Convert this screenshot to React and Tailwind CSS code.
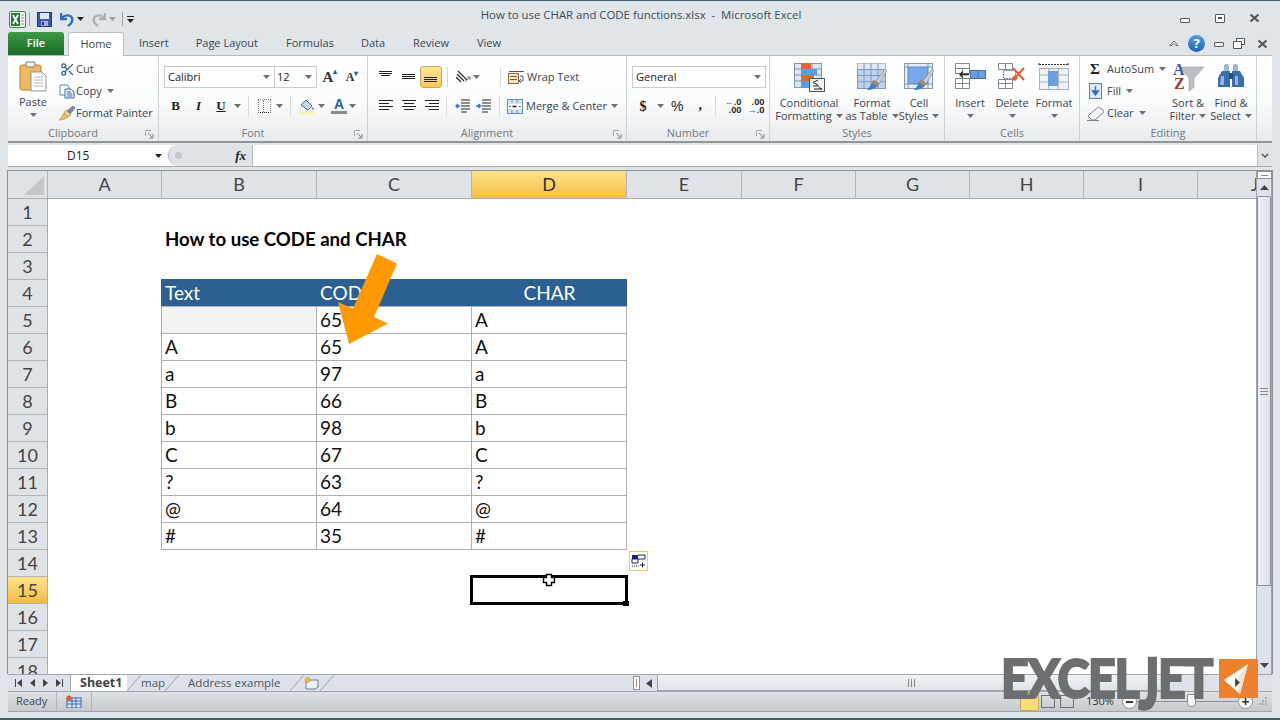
import React from 'react';
import { Scissors } from 'lucide-react';

const Caret = ({ className = '' }) => (
  <svg width="7" height="4" viewBox="0 0 7 4" className={`shrink-0 ${className}`}>
    <path d="M0 0h7L3.5 4z" fill="#6b6f75" />
  </svg>
);

// horizontal text lines, for the alignment buttons
const Lines = ({ rows, y0 = 0, gap = 3, width = 16, height = 12, color = '#222' }) => (
  <svg width={width} height={height} viewBox={`0 0 ${width} ${height}`}>
    {rows.map(([a, b], i) => (
      <rect key={i} x={a} y={y0 + i * gap} width={b - a} height="1" fill={color} />
    ))}
  </svg>
);

const Launcher = () => (
  <svg width="9" height="9" viewBox="0 0 9 9" className="absolute right-[4px] top-[3px]">
    <path d="M0.5 6V0.5H6" fill="none" stroke="#a5aab0" />
    <path d="M3 3l4 4M8 4v4H4" fill="none" stroke="#7d8288" />
  </svg>
);

const ExcelIcon = () => (
  <svg width="17" height="17" viewBox="0 0 17 17">
    <rect x="0.5" y="0.5" width="16" height="16" rx="1.5" fill="#f2f8ee" stroke="#3c8b3c" />
    <rect x="2" y="2" width="9" height="13" fill="#1f7a36" />
    <path d="M4 4l5 9M9 4l-5 9" stroke="#fff" strokeWidth="1.8" />
    <path d="M12 4h3M12 7h3M12 10h3M12 13h3" stroke="#6aa56a" />
  </svg>
);

const SaveIcon = () => (
  <svg width="15" height="15" viewBox="0 0 15 15">
    <rect x="0.5" y="0.5" width="14" height="14" fill="#3a55b8" stroke="#27357f" />
    <rect x="3" y="1" width="9" height="6" fill="#dfe7f5" />
    <rect x="4" y="9" width="7" height="5" fill="#a9b0c8" />
    <rect x="5" y="10" width="2" height="3" fill="#27357f" />
  </svg>
);

const UndoIcon = ({ color, flip }) => (
  <svg width="14" height="15" viewBox="0 0 14 15" className={flip ? '-scale-x-100' : ''}>
    <path d="M1 1v6h6M2 6c2-3 8-4 10 0 1 3-1 6-4 8" fill="none" stroke={color} strokeWidth="2.4" />
  </svg>
);

const PasteIcon = () => (
  <svg width="28" height="32" viewBox="0 0 28 32">
    <rect x="1" y="4" width="21" height="25" rx="2" fill="#f2b85f" stroke="#b5832f" />
    <rect x="7" y="1" width="9" height="5" rx="1" fill="#f4f4f4" stroke="#777" />
    <path d="M12 11h11l4 4v15H12z" fill="#fff" stroke="#8a94a3" />
    <path d="M15 16h9M15 19h9M15 22h9M15 25h9" stroke="#aeb6c2" />
  </svg>
);

const CopyIcon = () => (
  <svg width="16" height="15" viewBox="0 0 16 15">
    <path d="M1 1h7l2 2v8H1z" fill="#fff" stroke="#5a7db0" />
    <path d="M6 5h6l3 3v6H6z" fill="#e8f0fb" stroke="#3b68a8" />
    <path d="M8 8h4M8 10h5M8 12h5" stroke="#3b68a8" />
  </svg>
);

const PainterIcon = () => (
  <svg width="18" height="16" viewBox="0 0 18 16">
    <path d="M9 6l6-5 2 2-5 6z" fill="#7a8aa0" stroke="#4d5a6b" strokeWidth="0.6" />
    <path d="M8 5l5 5-3 2-4-4z" fill="#e5cf8e" stroke="#a08a40" strokeWidth="0.6" />
    <path d="M6 8l4 4c-2 2-6 3-9 3 2-1 3-4 5-7z" fill="#e8bf58" stroke="#a08a40" strokeWidth="0.6" />
  </svg>
);

const Grid = ({ x = 0, y = 0, w, h, cols, rows, fill = '#dce7f5', stroke = '#7f93ad' }) => {
  const cw = w / cols;
  const rh = h / rows;
  const parts = [];
  for (let i = 1; i < cols; i++) parts.push(`M${x + i * cw} ${y}v${h}`);
  for (let i = 1; i < rows; i++) parts.push(`M${x} ${y + i * rh}h${w}`);
  return (
    <g>
      <rect x={x + 0.5} y={y + 0.5} width={w} height={h} fill={fill} stroke={stroke} />
      <path d={parts.join('')} stroke={stroke} fill="none" />
    </g>
  );
};

const Brush = () => (
  <g>
    <path d="M20 19L29 7l2 2-8 13z" fill="#c9ccd1" stroke="#7d8288" strokeWidth="0.6" />
    <path d="M18 18l5 4c-2 4-7 6-12 6 3-2 4-7 7-10z" fill="#3b7fd1" />
    <path d="M18 18l5 4-2 2-5-3z" fill="#b28a4a" />
  </g>
);

const CondIcon = () => (
  <svg width="32" height="30" viewBox="0 0 32 30">
    <Grid x={1} y={1} w={27} h={24} cols={3} rows={4} fill="#dce6f3" />
    <rect x="8" y="1" width="10" height="6" fill="#ef5f35" />
    <rect x="8" y="7" width="16" height="6" fill="#5f9be0" />
    <rect x="8" y="13" width="13" height="6" fill="#ef5f35" />
    <rect x="8" y="19" width="10" height="6" fill="#5f9be0" />
    <rect x="16.5" y="16.5" width="15" height="13" fill="#f5f6f8" stroke="#555" />
    <path d="M25 18l-5 2.5 5 2.5M20 24h6M21 27h8l-3-1.5" fill="none" stroke="#222" />
  </svg>
);

const TableIcon = () => (
  <svg width="32" height="30" viewBox="0 0 32 30">
    <Grid x={1} y={1} w={28} h={25} cols={4} rows={4} fill="#bcd4f2" stroke="#8098b8" />
    <rect x="1.5" y="1.5" width="28" height="6" fill="#dfe8f4" />
    <path d="M1 7.5h28M8 1v6M15 1v6M22 1v6" stroke="#8098b8" />
    <Brush />
  </svg>
);

const StylesIcon = () => (
  <svg width="32" height="30" viewBox="0 0 32 30">
    <Grid x={1} y={1} w={28} h={25} cols={1} rows={1} fill="#e8eef6" stroke="#8098b8" />
    <rect x="5" y="5" width="20" height="17" fill="#7aa8ea" stroke="#5a86c8" />
    <path d="M5 1v4M25 1v4M1 5h4M25 5h4M1 22h4M25 22h4M5 22v4M25 22v4" stroke="#8098b8" />
    <Brush />
  </svg>
);

const InsertIcon = () => (
  <svg width="32" height="28" viewBox="0 0 32 28">
    <path d="M1.5 1.5h14v10h-14zM1.5 6.5h14M8.5 6.5v5M1.5 16.5h14v10h-14zM1.5 21.5h14M8.5 16.5v10" fill="#fff" stroke="#7f8793" />
    <rect x="16.5" y="8.5" width="15" height="8" fill="#6a9fe0" stroke="#3d72b8" />
    <path d="M24 8.5v8" stroke="#3d72b8" />
    <path d="M15 12.5H6M9 9.5l-3 3 3 3" fill="none" stroke="#222" strokeWidth="1.3" />
  </svg>
);

const DeleteIcon = () => (
  <svg width="30" height="28" viewBox="0 0 30 28">
    <path d="M1.5 1.5h14v6h-14zM8.5 1.5v6M1.5 17.5h14v9h-14zM1.5 21.5h14M8.5 17.5v9" fill="#fff" stroke="#7f8793" />
    <rect x="6.5" y="8.5" width="12" height="8" fill="#fff" stroke="#4a6fb0" strokeDasharray="1.5 1" />
    <path d="M16 6l11 12M27 6L16 18" stroke="#f0562a" strokeWidth="2" />
    <path d="M18 13l3 3-3 3-3-3z" fill="#f0562a" />
  </svg>
);

const FormatIcon = () => (
  <svg width="32" height="30" viewBox="0 0 32 30">
    <path d="M1 1v3M30 1v3M1 2.500h29" stroke="#333" strokeDasharray="2 1" />
    <Grid x={1} y={6} w={29} h={21} cols={3} rows={3} fill="#eef2f7" stroke="#a7afba" />
    <rect x="10" y="9" width="10" height="15" fill="#6a9fe0" />
  </svg>
);

const SortIcon = () => (
  <svg width="32" height="30" viewBox="0 0 32 30">
    <path d="M8 5h24L22 16v9l-5 4V16z" fill="#bdbfc2" stroke="#8a8d91" strokeWidth="0.5" />
    <text x="1" y="13" fontSize="16" fontWeight="700" fontFamily="Liberation Serif" fill="#2a5fb5">A</text>
    <text x="2" y="27" fontSize="16" fontWeight="700" fontFamily="Liberation Serif" fill="#a8392f">Z</text>
  </svg>
);

const FindIcon = () => (
  <svg width="28" height="28" viewBox="0 0 28 28">
    <rect x="7" y="2" width="5" height="8" rx="2" fill="#9db3d0" />
    <rect x="16" y="2" width="5" height="8" rx="2" fill="#9db3d0" />
    <path d="M5 9h8v16H1V16z" fill="#3a6ea8" />
    <path d="M15 9h8l4 7v9H15z" fill="#3a6ea8" />
    <path d="M4 14h3v9H3zM18 14h3v9h-3z" fill="#8fb5e0" />
    <rect x="12" y="11" width="4" height="6" fill="#26507f" />
  </svg>
);

const FillIcon = () => (
  <svg width="13" height="16" viewBox="0 0 13 16">
    <rect x="0.500" y="0.500" width="12" height="15" fill="#dbe7f7" stroke="#5a82b8" />
    <path d="M6.500 3v6M3.500 8l3 4 3-4z" fill="#2c6fc4" stroke="#2c6fc4" strokeWidth="1.3" />
  </svg>
);

const EraserIcon = () => (
  <svg width="17" height="15" viewBox="0 0 17 15">
    <path d="M1 10l9-8c1-1 2-1 3 0l3 2c1 1 1 2 0 3l-8 7H5z" fill="#f2f4f7" stroke="#7d8288" />
    <path d="M0 14.500h12" stroke="#7d8288" />
  </svg>
);

const WrapIcon = () => (
  <svg width="17" height="15" viewBox="0 0 17 15">
    <path d="M1 1.500h15" stroke="#555" />
    <rect x="0.500" y="3.500" width="10" height="10" fill="#f8e6d0" stroke="#8c6a3a" />
    <path d="M2 6.500h7M2 9.500h7" stroke="#8c5a1a" />
    <path d="M12 6h3v5h-3M13 9l-2 2 2 2" fill="none" stroke="#3b68a8" />
  </svg>
);

const MergeIcon = () => (
  <svg width="16" height="15" viewBox="0 0 16 15">
    <rect x="0.500" y="0.500" width="15" height="14" fill="#d7e4f5" stroke="#6a8bb8" />
    <rect x="1" y="5" width="14" height="5" fill="#fff" />
    <path d="M5 1v3M10 1v3M5 11v3M10 11v3" stroke="#6a8bb8" />
    <path d="M5.500 7.500h4" stroke="#222" strokeWidth="1.6" />
    <path d="M2 7.500h2M12 7.500h2" stroke="#2c6fc4" />
  </svg>
);

const Orient = () => (
  <svg width="16" height="14" viewBox="0 0 16 14">
    <path d="M2 1l9 9M1 4l7 7M0 7l5 5" stroke="#333" strokeWidth="1.3" />
    <path d="M9 12l5-5M11 7h3v3" fill="none" stroke="#777" />
  </svg>
);

const Indent = ({ flip }) => (
  <svg width="16" height="14" viewBox="0 0 16 14">
    <path d="M6 1h9M6 4h9M6 7h9M6 10h9M6 13h6" stroke="#222" />
    {flip ? (
      <path d="M0 7h4M2.500 5l2 2-2 2" fill="none" stroke="#2c6fc4" strokeWidth="1.3" />
    ) : (
      <path d="M5 7H1M3 5L1 7l2 2" fill="none" stroke="#2c6fc4" strokeWidth="1.3" />
    )}
  </svg>
);

const Sep = ({ className = '' }) => <div className={`w-px h-[20px] bg-[#d5d9de] shrink-0 ${className}`} />;

const SmallRow = ({ icon, label, caret, labelClass = '' }) => (
  <div className="h-[22px] flex items-center">
    <div className="w-[18px] flex justify-center">{icon}</div>
    <span className={labelClass}>{label}</span>
    {caret && <Caret className="ml-[5px]" />}
  </div>
);

const BigButton = ({ icon, lines, className = '' }) => (
  <div className={`flex flex-col items-center shrink-0 ${className}`}>
    <div className="h-[36px] pt-[6px] flex items-start justify-center">{icon}</div>
    <div className="leading-[13px] mt-[4px] whitespace-nowrap">{lines[0]}</div>
    <div className="leading-[13px] whitespace-nowrap flex items-center gap-[4px]">
      {lines[1]}
      {lines[1] && <Caret />}
    </div>
    {!lines[1] && <Caret className="mt-[5px]" />}
  </div>
);

const Group = ({ width, label, launcher, children }) => (
  <div className={`${width} shrink-0 flex flex-col border-r border-[#ccd1d6]`}>
    <div className="h-[71px] shrink-0">{children}</div>
    <div className={`relative h-[14px] shrink-0 leading-[12px] text-center text-[#6f7780] ${launcher ? 'pr-[20px]' : ''}`}>
      {label}
      {launcher && <Launcher />}
    </div>
  </div>
);

const cols = [
  ['A', 'w-[114px]'],
  ['B', 'w-[155px]'],
  ['C', 'w-[155px]'],
  ['D', 'w-[155px]'],
  ['E', 'w-[115px]'],
  ['F', 'w-[114px]'],
  ['G', 'w-[114px]'],
  ['H', 'w-[114px]'],
  ['I', 'w-[114px]'],
  ['J', 'w-[114px]'],
];

const tableRows = [
  ['', '65', 'A'],
  ['A', '65', 'A'],
  ['a', '97', 'a'],
  ['B', '66', 'B'],
  ['b', '98', 'b'],
  ['C', '67', 'C'],
  ['?', '63', '?'],
  ['@', '64', '@'],
  ['#', '35', '#'],
];

const rowNums = Array.from({ length: 18 }, (_, i) => i + 1);

const Slant = () => (
  <svg width="14" height="17" viewBox="0 0 14 17" className="shrink-0">
    <path d="M0 16L13 1h1" fill="none" stroke="#9aa1ab" />
  </svg>
);

export default function App() {
  return (
    <div className="relative w-[1280px] h-[720px] overflow-hidden bg-[#dfe5e8] font-['Open_Sans',sans-serif] text-[11px] text-[#3b4552] flex flex-col border-t border-[#3f5d6b]">
      {/* Title bar */}
      <div className="h-[30px] shrink-0 flex items-center pl-[9px] pr-[9px] pt-[6px]">
        <ExcelIcon />
        <div className="w-px h-[14px] bg-[#9aa3ab] ml-[3px]" />
        <div className="ml-[7px]"><SaveIcon /></div>
        <div className="ml-[8px]"><UndoIcon color="#2f6fb8" /></div>
        <Caret className="ml-[3px] [&_path]:fill-[#222]" />
        <div className="ml-[8px]"><UndoIcon color="#aab1b8" flip /></div>
        <Caret className="ml-[3px] opacity-60" />
        <div className="w-px h-[14px] bg-[#9aa3ab] ml-[6px]" />
        <div className="ml-[4px] flex flex-col items-center gap-[2px]">
          <div className="w-[7px] h-px bg-[#222]" />
          <Caret className="[&_path]:fill-[#222]" />
        </div>
        <div className="flex-1 text-center text-[11.400px] text-[#3d4a58] -ml-[19px] -mt-[8px] whitespace-pre">How to use CHAR and CODE functions.xlsx  -  Microsoft Excel</div>
        <div className="flex items-center text-[#444] -mt-[2px]">
          <div className="w-[35px] flex justify-center"><div className="w-[10px] h-[5px] border border-[#555] rounded-[1px] bg-white mt-[5px]" /></div>
          <div className="w-[35px] flex justify-center"><div className="w-[10px] h-[9px] border border-[#555] rounded-[1px] bg-white flex items-center justify-center"><div className="w-[4px] h-[2px] bg-[#555]" /></div></div>
          <div className="w-[35px] flex justify-center -mr-[1px]">
            <svg width="11" height="10" viewBox="0 0 11 10"><path d="M1.500 1.500l8 7M9.500 1.500l-8 7" stroke="#555" strokeWidth="2.200" /></svg>
          </div>
        </div>
      </div>

      {/* Tabs */}
      <div className="h-[24px] shrink-0 flex items-end pl-[8px] pr-[12px] relative z-10">
        <div className="w-[56px] h-[23px] rounded-t-[3px] bg-gradient-to-b from-[#3e9a45] to-[#1d6b2a] text-white font-semibold flex items-center justify-center">File</div>
        <div className="w-[56px] h-[24px] ml-[4px] -mb-px bg-white border border-b-0 border-[#b8bec4] rounded-t-[3px] flex items-center justify-center">Home</div>
        <div className="ml-[15px] h-[23px] flex items-center">Insert</div>
        <div className="ml-[27px] h-[23px] flex items-center">Page Layout</div>
        <div className="ml-[28px] h-[23px] flex items-center">Formulas</div>
        <div className="ml-[27px] h-[23px] flex items-center">Data</div>
        <div className="ml-[28px] h-[23px] flex items-center">Review</div>
        <div className="ml-[28px] h-[23px] flex items-center">View</div>
        <div className="ml-auto h-[23px] flex items-center">
          <svg width="10" height="7" viewBox="0 0 10 7" className="mr-[9px]">
            <path d="M5 1L9 5.500H7L5 3.500 3 5.500H1z" fill="#fff" stroke="#555" strokeWidth="0.9" />
          </svg>
          <div className="w-[17px] h-[17px] rounded-full bg-gradient-to-b from-[#5a9be0] to-[#1e62b8] text-white text-[13px] font-bold flex items-center justify-center">?</div>
          <div className="w-[10px] h-[5px] border border-[#555] rounded-[1px] bg-white ml-[9px] mt-[2px]" />
          <svg width="12" height="11" viewBox="0 0 12 11" className="ml-[9px]"><path d="M3.500 3V.5h8v6H9M.5 3.500h8v7h-8z" fill="#fff" stroke="#555" /></svg>
          <svg width="11" height="10" viewBox="0 0 11 10" className="ml-[12px]"><path d="M1.500 1.500l8 7M9.500 1.500l-8 7" stroke="#555" strokeWidth="2.200" /></svg>
        </div>
      </div>

      {/* Ribbon */}
      <div className="h-[88px] shrink-0 mx-[8px] flex border-t border-x-0 border-b-2 border-[#b3b9bf] border-b-[#8f959b] bg-gradient-to-b from-white via-[#fbfcfc] to-[#e8ebee] relative">
        <Group width="w-[151px]" label="Clipboard" launcher>
          <div className="flex">
            <div className="w-[50px] flex flex-col items-center pt-[5px]">
              <PasteIcon />
              <div className="mt-[2px] leading-[14px]">Paste</div>
              <Caret className="mt-[4px]" />
            </div>
            <div className="pt-[2px]">
              <SmallRow icon={<Scissors size={15} className="text-[#2c5f9e]" />} label="Cut" />
              <SmallRow icon={<CopyIcon />} label="Copy" caret />
              <SmallRow icon={<PainterIcon />} label="Format Painter" />
            </div>
          </div>
        </Group>

        <Group width="w-[209px]" label="Font" launcher>
          <div className="pt-[10px] pl-[5px]">
            <div className="flex items-center h-[22px]">
              <div className="w-[111px] h-[22px] border border-[#c5cad0] bg-white flex items-center pl-[3px] pr-[4px] justify-between text-[#222]">Calibri<Caret /></div>
              <div className="w-[42px] h-[22px] border border-l-0 border-[#c5cad0] bg-white flex items-center pl-[2px] pr-[4px] justify-between text-[#222]">12<Caret /></div>
              <div className="w-[24px] ml-[1px] flex justify-center text-[15px] font-bold font-['Liberation_Serif',serif] text-[#333]">A<span className="text-[8px] text-[#2c5f9e]">▴</span></div>
              <div className="w-[20px] flex justify-center text-[12px] font-bold font-['Liberation_Serif',serif] text-[#333]">A<span className="text-[8px] text-[#2c5f9e]">▾</span></div>
            </div>
            <div className="flex items-center h-[22px] mt-[7px] text-[#222]">
              <div className="w-[23px] text-center text-[13px] font-bold font-['Liberation_Serif',serif]">B</div>
              <div className="w-[23px] text-center text-[13px] italic font-bold font-['Liberation_Serif',serif]">I</div>
              <div className="w-[22px] text-center text-[13px] font-bold underline font-['Liberation_Serif',serif]">U</div>
              <Caret className="ml-[2px]" />
              <Sep className="ml-[7px]" />
              <div className="w-[20px] ml-[5px] h-[14px] flex justify-center">
                <div className="w-[13px] h-[14px] border-b border-b-[#222] border-t border-x border-dotted border-[#777] grid grid-cols-2"><div className="border-r border-dotted border-[#777]" /></div>
              </div>
              <Caret className="ml-[2px]" />
              <Sep className="ml-[7px]" />
              <div className="ml-[8px] flex flex-col items-center">
                <svg width="15" height="12" viewBox="0 0 15 12"><path d="M1 6l5-5 6 6-4 4z" fill="#c8d8ee" stroke="#3b68a8" /><path d="M13 8c1 1 1 3 0 3s-1-2 0-3z" fill="#2c6fc4" /></svg>
                <div className="w-[16px] h-[3px] bg-[#fdf3a8]" />
              </div>
              <Caret className="ml-[3px]" />
              <div className="ml-[6px] flex flex-col items-center w-[16px]">
                <span className="text-[14px] leading-[13px] font-bold text-[#2c5f9e] font-['Liberation_Sans',sans-serif]">A</span>
                <div className="w-[16px] h-[3px] bg-[#8a8a8a]" />
              </div>
              <Caret className="ml-[2px]" />
            </div>
          </div>
        </Group>

        <Group width="w-[259px]" label="Alignment" launcher>
          <div className="pt-[10px]">
            <div className="flex items-center h-[22px]">
              <div className="w-[29px] ml-[3px] flex justify-center"><Lines rows={[[1, 14], [1, 14], [3, 12]]} gap={2} /></div>
              <div className="w-[17px] flex justify-center"><Lines rows={[[1, 14], [1, 14], [1, 14]]} y0={3} gap={2} /></div>
              <div className="w-[22px] h-[22px] ml-[3px] rounded-[3px] border border-[#c9a85a] bg-gradient-to-b from-[#fde59a] to-[#fcc94f] flex items-center justify-center"><Lines rows={[[1, 14], [1, 14], [1, 14]]} y0={6} gap={2} /></div>
              <Sep className="ml-[5px]" />
              <div className="ml-[8px]"><Orient /></div>
              <Caret className="ml-[1px]" />
              <Sep className="ml-[20px]" />
              <div className="ml-[7px]"><WrapIcon /></div>
              <span className="ml-[2px]">Wrap Text</span>
            </div>
            <div className="flex items-center h-[22px] mt-[7px]">
              <div className="w-[29px] ml-[3px] flex justify-center"><Lines rows={[[1, 15], [1, 11], [1, 15], [1, 11]]} /></div>
              <div className="w-[17px] flex justify-center"><Lines rows={[[1, 15], [3, 13], [1, 15], [3, 13]]} /></div>
              <div className="w-[29px] flex justify-center"><Lines rows={[[1, 15], [5, 15], [1, 15], [5, 15]]} /></div>
              <Sep />
              <div className="ml-[8px]"><Indent /></div>
              <div className="ml-[5px]"><Indent flip /></div>
              <Sep className="ml-[7px]" />
              <div className="ml-[7px]"><MergeIcon /></div>
              <span className="ml-[3px]">Merge &amp; Center</span>
              <Caret className="ml-[4px]" />
            </div>
          </div>
        </Group>

        <Group width="w-[143px]" label="Number" launcher>
          <div className="pt-[10px] pl-[5px]">
            <div className="w-[134px] h-[22px] border border-[#c5cad0] bg-white flex items-center pl-[3px] pr-[4px] justify-between text-[#222]">General<Caret /></div>
            <div className="flex items-center h-[22px] mt-[7px] text-[#222]">
              <span className="w-[14px] ml-[4px] text-center text-[14px] font-bold font-['Liberation_Serif',serif]">$</span>
              <Caret className="ml-[7px]" />
              <span className="ml-[7px] text-[14px] font-['Liberation_Sans',sans-serif]">%</span>
              <span className="ml-[15px] w-[7px] text-[14px] font-bold font-['Liberation_Serif',serif] -mt-[3px]">,</span>
              <Sep className="ml-[10px]" />
              <div className="ml-[7px] text-[9px] leading-[8px] font-bold text-[#333] w-[18px] text-right"><span className="text-[#2c6fc4]">←</span>.0<br />.00</div>
              <div className="ml-[5px] text-[9px] leading-[8px] font-bold text-[#333] w-[18px] text-right">.00<br /><span className="text-[#2c6fc4]">→</span>.0</div>
            </div>
          </div>
        </Group>

        <Group width="w-[175px]" label="Styles">
          <div className="flex">
            <BigButton icon={<CondIcon />} lines={['Conditional', 'Formatting']} className="w-[78px]" />
            <BigButton icon={<TableIcon />} lines={['Format', 'as Table']} className="w-[48px]" />
            <BigButton icon={<StylesIcon />} lines={['Cell', 'Styles']} className="w-[46px]" />
          </div>
        </Group>

        <Group width="w-[135px]" label="Cells">
          <div className="flex pl-[4px]">
            <BigButton icon={<InsertIcon />} lines={['Insert']} className="w-[42px]" />
            <BigButton icon={<DeleteIcon />} lines={['Delete']} className="w-[42px]" />
            <BigButton icon={<FormatIcon />} lines={['Format']} className="w-[42px]" />
          </div>
        </Group>

        <Group width="w-[177px]" label="Editing">
          <div className="flex">
            <div className="pt-[2px] pl-[6px] w-[91px]">
              <SmallRow icon={<span className="text-[15px] font-bold leading-none text-[#222] font-['Liberation_Serif',serif]">Σ</span>} label="AutoSum" labelClass="ml-[3px]" caret />
              <SmallRow icon={<FillIcon />} label="Fill" labelClass="ml-[3px]" caret />
              <SmallRow icon={<EraserIcon />} label="Clear" labelClass="ml-[3px]" caret />
            </div>
            <BigButton icon={<SortIcon />} lines={['Sort &', 'Filter']} className="w-[42px] -ml-[4px]" />
            <BigButton icon={<FindIcon />} lines={['Find &', 'Select']} className="w-[44px]" />
          </div>
        </Group>
      </div>

      {/* Formula bar */}
      <div className="h-[22px] shrink-0 mt-[2px] mx-[8px] flex bg-white border-b border-[#a7adb3] text-[12px] text-[#222]">
        <div className="w-[160px] flex items-center pl-[59px] pr-[6px] justify-between">
          D15
          <Caret className="[&_path]:fill-[#222]" />
        </div>
        <div className="w-[85px] bg-[#dfe3e8] rounded-l-[10px] border-l border-[#b5bac0] border-r flex items-center pl-[6px] pr-[6px] justify-between">
          <div className="w-[7px] h-[7px] rounded-full bg-[#c4c9cf]" />
          <span className="font-['Liberation_Serif',serif] italic font-bold text-[13px]">fx</span>
        </div>
        <div className="flex-1" />
        <div className="w-[15px] bg-[#dfe3e8] border-l border-[#b5bac0] flex items-center justify-center">
          <svg width="8" height="5" viewBox="0 0 8 5"><path d="M1 1l3 3 3-3" fill="none" stroke="#555" strokeWidth="1.500" /></svg>
        </div>
      </div>

      {/* Sheet */}
      <div className="h-[504px] shrink-0 mt-[3px] ml-[7px] mr-[7px] flex flex-col border-t border-x border-[#8b9096]">
        <div className="flex h-[28px] shrink-0 overflow-hidden bg-[#dfe2e7] border-b border-[#a8adb5] font-['Lato',sans-serif] text-[18px] text-[#444] mr-[16px]">
          <div className="w-[40px] shrink-0 border-r border-[#b0b4ba] flex items-end justify-end p-[3px]">
            <svg width="20" height="19" viewBox="0 0 20 19"><path d="M20 0v19H0z" fill="#c2c6cb" /></svg>
          </div>
          {cols.map(([name, w]) => (
            <div
              key={name}
              className={`${w} shrink-0 border-r border-[#b0b4ba] flex items-center justify-center ${name === 'D' ? 'bg-gradient-to-b from-[#fde38a] to-[#f5bc3b] text-[#333]' : ''}`}
            >
              {name}
            </div>
          ))}
        </div>
        <div className="flex flex-1 min-h-0">
          <div className="w-[40px] shrink-0 overflow-hidden bg-[#dfe2e7] border-r border-[#a8adb5] font-['Lato',sans-serif] text-[18px] text-[#444]">
            {rowNums.map((n) => (
              <div
                key={n}
                className={`h-[27px] border-b border-[#b0b4ba] flex items-center justify-center ${n === 15 ? 'bg-gradient-to-b from-[#fde38a] to-[#f5bc3b]' : ''}`}
              >
                {n}
              </div>
            ))}
          </div>
          <div className="flex-1 bg-white overflow-hidden font-['Lato',sans-serif] text-[19px] text-[#111]">
            <div className="h-[27px]" />
            <div className="h-[27px] pl-[117px] flex items-center text-[18.600px] font-bold text-black">How to use CODE and CHAR</div>
            <div className="h-[26px]" />
            <div className="ml-[113px] w-[466px]">
              <div className="h-[27px] pt-[2px] bg-[#2c6092] text-white flex items-center">
                <div className="w-[155px] pl-[4px]">Text</div>
                <div className="w-[155px] pl-[4px]">CODE</div>
                <div className="w-[155px] text-center pl-[2px]">CHAR</div>
              </div>
              <div className="border-t border-[#b0b0b0]">
                {tableRows.map((r, i) => (
                  <div key={i} className="h-[27px] flex border-b border-l border-[#b0b0b0]">
                    <div className={`w-[155px] pl-[3px] flex items-center border-r border-[#b0b0b0] ${i === 0 ? 'bg-[#f2f2f2]' : ''}`}>{r[0]}</div>
                    <div className="w-[155px] pl-[3px] flex items-center border-r border-[#b0b0b0]">{r[1]}</div>
                    <div className="w-[155px] pl-[3px] flex items-center border-r border-[#b0b0b0]">{r[2]}</div>
                  </div>
                ))}
              </div>
            </div>
          </div>
          <div className="w-[16px] shrink-0" />
        </div>
      </div>

      {/* Sheet tabs and horizontal scrollbar */}
      <div className="h-[17px] shrink-0 mx-[8px] flex items-center bg-[#dde2ea] border-t border-[#a0a6ad] text-[11.500px] text-[#4a5562]">
        <div className="w-[63px] h-full border-r border-[#a0a6ad] flex items-center justify-around px-[3px] text-[#444]">
          <svg width="7" height="8" viewBox="0 0 7 8"><path d="M0 0h1v8H0zM7 0v8L2 4z" fill="#444" /></svg>
          <svg width="5" height="8" viewBox="0 0 5 8"><path d="M5 0v8L0 4z" fill="#444" /></svg>
          <svg width="5" height="8" viewBox="0 0 5 8"><path d="M0 0v8l5-4z" fill="#444" /></svg>
          <svg width="7" height="8" viewBox="0 0 7 8"><path d="M6 0h1v8H6zM0 0v8l5-4z" fill="#444" /></svg>
        </div>
        <div className="w-[56px] h-full bg-white flex items-center pl-[9px] font-bold text-[12.500px] text-[#444]">Sheet1</div>
        <Slant />
        <span>map</span>
        <Slant />
        <div className="w-[9px]" />
        <span>Address example</span>
        <div className="ml-[10px]"><Slant /></div>
        <svg width="15" height="13" viewBox="0 0 15 13" className="shrink-0">
          <path d="M2 3h12v7l-3 2H2z" fill="#eef2f8" stroke="#6b7a8c" />
          <circle cx="3.500" cy="3" r="2.500" fill="#f4b93a" stroke="#c98a1a" strokeWidth="0.6" />
        </svg>
        <div className="ml-[1px]"><Slant /></div>
        <div className="ml-auto flex items-center h-full">
          <div className="w-[7px] h-[14px] bg-white border border-[#8b9096] mr-[6px] flex justify-center items-center"><div className="w-px h-[8px] bg-[#888]" /></div>
          <svg width="6" height="9" viewBox="0 0 6 9" className="mr-[5px]"><path d="M6 0v9L0 4.500z" fill="#444" /></svg>
          <div className="w-[508px] h-full bg-gradient-to-b from-[#f0f2f6] to-[#dfe3ea] border-x border-b border-[#9ca3ac] flex items-center justify-center">
            <div className="w-[7px] h-[8px] border-x border-[#888] flex justify-center"><div className="w-px bg-[#888]" /></div>
          </div>
          <div className="w-[107px]" />
        </div>
      </div>

      {/* Status bar */}
      <div className="h-[21px] shrink-0 mx-[8px] flex items-center bg-gradient-to-b from-[#dee1e5] to-[#c5c9ce] border-t border-b border-[#a0a6ad] text-[#3b4552]">
        <div className="w-[49px] pl-[8px] h-full flex items-center border-r border-[#b0b5bb]">Ready</div>
        <div className="w-[35px] h-full flex items-center justify-center border-r border-[#b0b5bb]">
          <svg width="16" height="13" viewBox="0 0 16 13">
            <rect x="1" y="3" width="14" height="10" fill="#dbe7f7" stroke="#3b68a8" />
            <path d="M1 6h14M1 9h14M6 3v10M10 3v10" stroke="#3b68a8" />
            <circle cx="3" cy="3" r="2.500" fill="#e2563a" />
          </svg>
        </div>
        <div className="ml-auto flex items-center pr-[4px]">
          <div className="w-[19px] h-[19px] rounded-[2px] border border-[#c9a85a] bg-[#fcdc76]" />
          <div className="w-[14px] h-[13px] ml-[2px] border border-[#6b7078]" />
          <div className="w-[14px] h-[13px] ml-[5px] border border-[#6b7078]" />
          <span className="ml-[12px] w-[27px] text-[#333]">130%</span>
          <div className="w-[15px] h-[15px] ml-[9px] rounded-full border border-[#8b9096] bg-white flex items-center justify-center"><div className="w-[7px] h-[2px] bg-[#333]" /></div>
          <div className="relative w-[101px] h-px bg-[#8b9096]">
            <div className="absolute left-[50px] -top-[7px] w-[9px] h-[13px] bg-[#f4f5f7] border border-[#8b9096] rounded-b-[4px]" />
          </div>
          <div className="w-[15px] h-[15px] rounded-full border border-[#8b9096] bg-white flex items-center justify-center text-[14px] font-bold leading-none text-[#333]">+</div>
          <svg width="12" height="12" viewBox="0 0 12 12" className="ml-[3px]">
            <path d="M9 1h2v2H9zM6 4h2v2H6zM9 4h2v2H9zM3 7h2v2H3zM6 7h2v2H6zM9 7h2v2H9z" fill="#a8adb3" />
          </svg>
        </div>
      </div>

      <div className="flex-1" />
      <div className="h-[2px] shrink-0 bg-[#3f5d6b]" />

      {/* Vertical scrollbar, lies over the sheet's right edge */}
      <div className="absolute left-[1256px] top-[170px] w-[16px] h-[503px] bg-[#dde2ea] border-x border-[#9ca3ac] flex flex-col items-center">
        <div className="w-[15px] h-[8px] bg-white border border-[#8b9096] flex items-center justify-center"><div className="w-[7px] h-px bg-[#888]" /></div>
        <svg width="9" height="5" viewBox="0 0 9 5" className="mt-[6px]"><path d="M0 5h9L4.500 0z" fill="#444" /></svg>
        <div className="w-[14px] h-[390px] mt-[6px] rounded-t-[2px] bg-gradient-to-r from-[#eef1f6] to-[#dde1e8] border border-[#8b9096] flex items-center justify-center">
          <div className="w-[8px] h-[7px] border-y border-[#888] flex items-center"><div className="w-full h-px bg-[#888]" /></div>
        </div>
        <svg width="9" height="5" viewBox="0 0 9 5" className="mt-auto mb-[6px]"><path d="M0 0h9L4.500 5z" fill="#444" /></svg>
      </div>

      {/* Selected cell D15 and its overlays */}
      <div className="absolute left-[470px] top-[574px] w-[158px] h-[30px] border-[3px] border-black" />
      <div className="absolute left-[623px] top-[600px] w-[6px] h-[5px] bg-black" />
      <div className="absolute left-[629px] top-[550px] w-[19px] h-[20px] border border-[#f2cc5c] bg-white flex items-center justify-center">
        <svg width="15" height="14" viewBox="0 0 15 14">
          <path d="M1 1h6v4H1z" fill="#1a237e" />
          <path d="M7 1h7v4H7M1 5h6v4H1z" fill="#fff" stroke="#1a237e" />
          <path d="M1 12h7" stroke="#222" strokeDasharray="1 1" />
          <path d="M9 11h5M11.500 8.500v5" stroke="#222" />
        </svg>
      </div>
      <svg width="14" height="14" viewBox="0 0 14 14" className="absolute left-[542px] top-[572px]">
        <path d="M4.500 1.500h5v3h3v5h-3v3h-5v-3h-3v-5h3z" fill="#fff" stroke="#000" strokeWidth="1.400" />
      </svg>

      {/* Orange arrow */}
      <svg width="70" height="100" viewBox="0 0 70 100" className="absolute left-[335px] top-[251px]">
        <path d="M42 2L62 11.500 39 65 53 71.500 14 92 3 50 18 56.500z" fill="#ff9900" />
      </svg>

      {/* Watermark logo */}
      <div className="absolute left-[1001px] top-[644px] h-[66px] flex items-start origin-left scale-x-[0.895] font-['Lato',sans-serif] font-black text-[54px] leading-[66px] tracking-[-1.500px] text-[#6d6e70] [-webkit-text-stroke:2px_#6d6e70] whitespace-nowrap">
        EXCEL<span className="inline-block origin-[50%_15px] scale-y-[1.3]">J</span>ET
      </div>
      <div className="absolute left-[1219px] top-[658px] w-[39px] h-[39px] bg-[#ee7f2d]">
        <svg width="39" height="39" viewBox="0 0 39 39">
          <path d="M29 5L5 21l16 14z" fill="#fff" />
          <path d="M29 5L15 24l6 11z" fill="#f4e3d7" />
          <path d="M16 19v9l5-4.500z" fill="#4a4a4a" />
        </svg>
      </div>
    </div>
  );
}
